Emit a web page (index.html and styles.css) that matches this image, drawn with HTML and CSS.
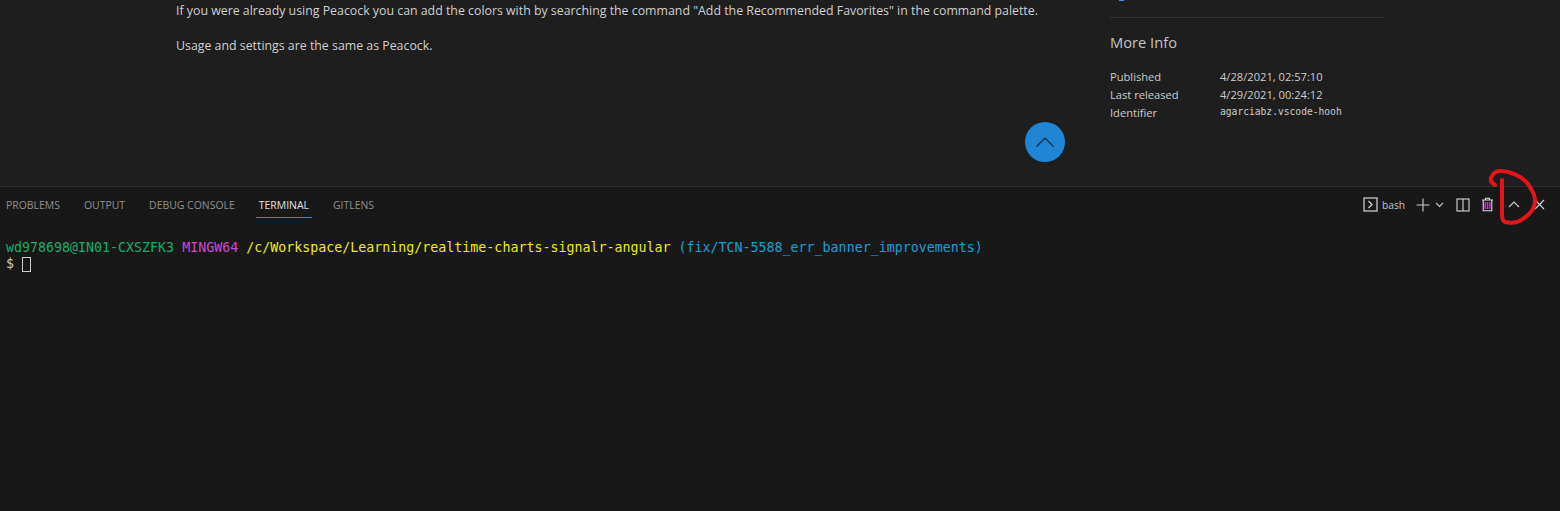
FILE: index.html
```html
<!DOCTYPE html>
<html lang="en">
<head>
<meta charset="utf-8">
<title>Terminal panel</title>
<link rel="stylesheet" href="styles.css">
</head>
<body>
<main class="editor">
  <section class="readme">
    <p class="para">If you were already using Peacock you can add the colors with by searching the command "Add the Recommended Favorites" in the command palette.</p>
    <p class="para">Usage and settings are the same as Peacock.</p>
  </section>
  <div class="scroll-col">
    <button class="scroll-top" aria-label="Scroll to top">
      <svg width="20" height="12" viewBox="0 0 20 12"><path d="M1.5 10.500 10 2l8.500 8.500" fill="none" stroke="#10263a" stroke-width="1.200"/></svg>
    </button>
  </div>
  <aside class="side">
    <span class="link-stub"></span>
    <hr class="rule">
    <h2 class="side-title">More Info</h2>
    <dl class="info">
      <dt>Published</dt><dd>4/28/2021, 02:57:10</dd>
      <dt>Last released</dt><dd>4/29/2021, 00:24:12</dd>
      <dt>Identifier</dt><dd class="code">agarciabz.vscode-hooh</dd>
    </dl>
  </aside>
</main>
<section class="panel">
  <header class="tabs">
    <nav class="tablist">
      <span class="tab">PROBLEMS</span>
      <span class="tab">OUTPUT</span>
      <span class="tab">DEBUG CONSOLE</span>
      <span class="tab active">TERMINAL</span>
      <span class="tab">GITLENS</span>
    </nav>
    <div class="actions">
      <svg class="ico-bash" width="15" height="15" viewBox="0 0 15 15"><rect x="1" y="1" width="13" height="13" fill="none" stroke="#c8c8c8" stroke-width="1.300"/><path d="M5.500 4 9 7.500 5.500 11" fill="none" stroke="#d0d0d0" stroke-width="1.300"/></svg>
      <span class="shell">bash</span>
      <svg class="ico-plus" width="14" height="14" viewBox="0 0 14 14"><path d="M7 .5v13M.5 7h13" stroke="#d0d0d0" fill="none" stroke-width="1.100"/></svg>
      <svg class="ico-chev" width="9" height="6" viewBox="0 0 9 6"><path d="M1 1l3.500 3.500L8 1" fill="none" stroke="#b8c4d0" stroke-width="1.100"/></svg>
      <svg class="ico-split" width="14" height="14" viewBox="0 0 14 14"><rect x="1" y="1" width="12" height="12" fill="none" stroke="#c8c8c8" stroke-width="1.200"/><path d="M7 1v12" stroke="#c8c8c8" stroke-width="1.200"/></svg>
      <svg class="ico-trash" width="13" height="15" viewBox="0 0 13 15"><path d="M1 3h11M4.500 3V1.200h4V3M2.200 3v10.800h8.600V3" fill="none" stroke="#d8d8e0" stroke-width="1.100"/><path d="M4.200 5v7M6.500 5v7M8.800 5v7" stroke="#e020e0" stroke-width="1.500"/></svg>
      <svg class="ico-up" width="12" height="7" viewBox="0 0 12 7"><path d="M1 6l5-5 5 5" fill="none" stroke="#c8ccd0" stroke-width="1.200"/></svg>
      <svg class="ico-close" width="11" height="11" viewBox="0 0 11 11"><path d="M1 1l9 9M10 1l-9 9" fill="none" stroke="#c8d0d8" stroke-width="1.200"/></svg>
    </div>
  </header>
  <div class="term">
    <div class="line"><span class="green">wd978698@IN01-CXSZFK3</span> <span class="magenta">MINGW64</span> <span class="yellow">/c/Workspace/Learning/realtime-charts-signalr-angular</span> <span class="cyan">(fix/TCN-5588_err_banner_improvements)</span></div>
    <div class="line"><span class="prompt">$</span> <span class="cursor"></span></div>
  </div>
</section>
<svg class="scribble" width="54" height="62" viewBox="0 0 54 62"><path d="M9 19C6 17 4 15 5 12 7 7 10 5 14 5 21 5 29 8 34 11 39 14 42 17 44 21 47 26 49 30 49 34 49 39 47 44 44 47 40 51 36 54 31 56 27 57 23 57 19 56 17 55 16 53 16 49 16 37 16 25 16 14" fill="none" stroke="#e3151a" stroke-width="4" stroke-linecap="round" stroke-linejoin="round"/></svg>
</body>
</html>
```

FILE: styles.css
```css
* { box-sizing: border-box; }
html, body { margin: 0; height: 100%; }
body {
  width: 1560px;
  height: 511px;
  overflow: hidden;
  background: #181818;
  font-family: "Open Sans", "Noto Sans", sans-serif;
  color: #cccccc;
  display: flex;
  flex-direction: column;
  position: relative;
}
.editor {
  height: 186px;
  flex: none;
  background: #1e1e1e;
  display: flex;
  overflow: hidden;
}
.readme { width: 849px; margin-left: 176px; padding-top: 1px; }
.para {
  margin: 0 0 16px;
  font-size: 12.350px;
  line-height: 19px;
  color: #d0d0d0;
  white-space: nowrap;
}
.scroll-col { width: 85px; position: relative; }
.scroll-top {
  position: absolute;
  left: 0;
  top: 122px;
  width: 40px;
  height: 40px;
  border: 0;
  padding: 0;
  border-radius: 50%;
  background: #2185d6;
  display: flex;
  align-items: center;
  justify-content: center;
}
.side { width: 275px; display: flex; flex-direction: column; }
.link-stub { height: 1px; width: 5px; margin-left: 9px; background: #3794ff; }
.rule { margin: 16px 0 0; border: 0; height: 1px; background: #333333; }
.side-title {
  margin: 14px 0 0;
  font-size: 14.700px;
  line-height: 20px;
  font-weight: 400;
  color: #c4c4c4;
}
.info {
  margin: 16px 0 0;
  display: grid;
  grid-template-columns: 110px 1fr;
  grid-auto-rows: 18px;
  font-size: 11.150px;
  line-height: 18px;
  color: #cccccc;
}
.info dd { margin: 0; }
.info .code { font-family: "DejaVu Sans Mono", monospace; font-size: 9.650px; line-height: 16px; }
.panel { flex: 1; border-top: 1px solid #2d2d2d; background: #181818; }
.tabs { height: 35px; display: flex; justify-content: space-between; align-items: center; }
.tablist { display: flex; gap: 18px; padding-left: 3px; align-self: flex-start; }
.tab {
  font-size: 10.450px;
  line-height: 36px;
  height: 31px;
  padding: 0 3px;
  color: #8f8f8f;
}
.tab.active { color: #e0e0e0; border-bottom: 1px solid #3a86c8; }
.actions { display: flex; align-items: center; padding-right: 15px; }
.ico-bash { margin-right: 4px; }
.shell { font-size: 10.200px; color: #c4c4c4; margin-right: 11px; }
.ico-plus { margin-right: 5px; }
.ico-chev { margin-right: 12px; }
.ico-split { margin-right: 11px; }
.ico-trash { margin-right: 14px; }
.ico-up { margin-right: 14px; }
.term {
  padding: 18px 0 0 6px;
  font-family: "DejaVu Sans Mono", monospace;
  font-size: 13.300px;
  line-height: 16px;
}
.line { height: 16px; white-space: pre; }
.green { color: #14b068; }
.magenta { color: #d048d2; }
.yellow { color: #ecec10; }
.cyan { color: #10a2d8; }
.prompt { color: #c8c8c8; }
.cursor {
  display: inline-block;
  width: 9px;
  height: 15px;
  border: 1px solid #cccccc;
  vertical-align: -4px;
}
.scribble { position: absolute; left: 1486px; top: 166px; }
```
